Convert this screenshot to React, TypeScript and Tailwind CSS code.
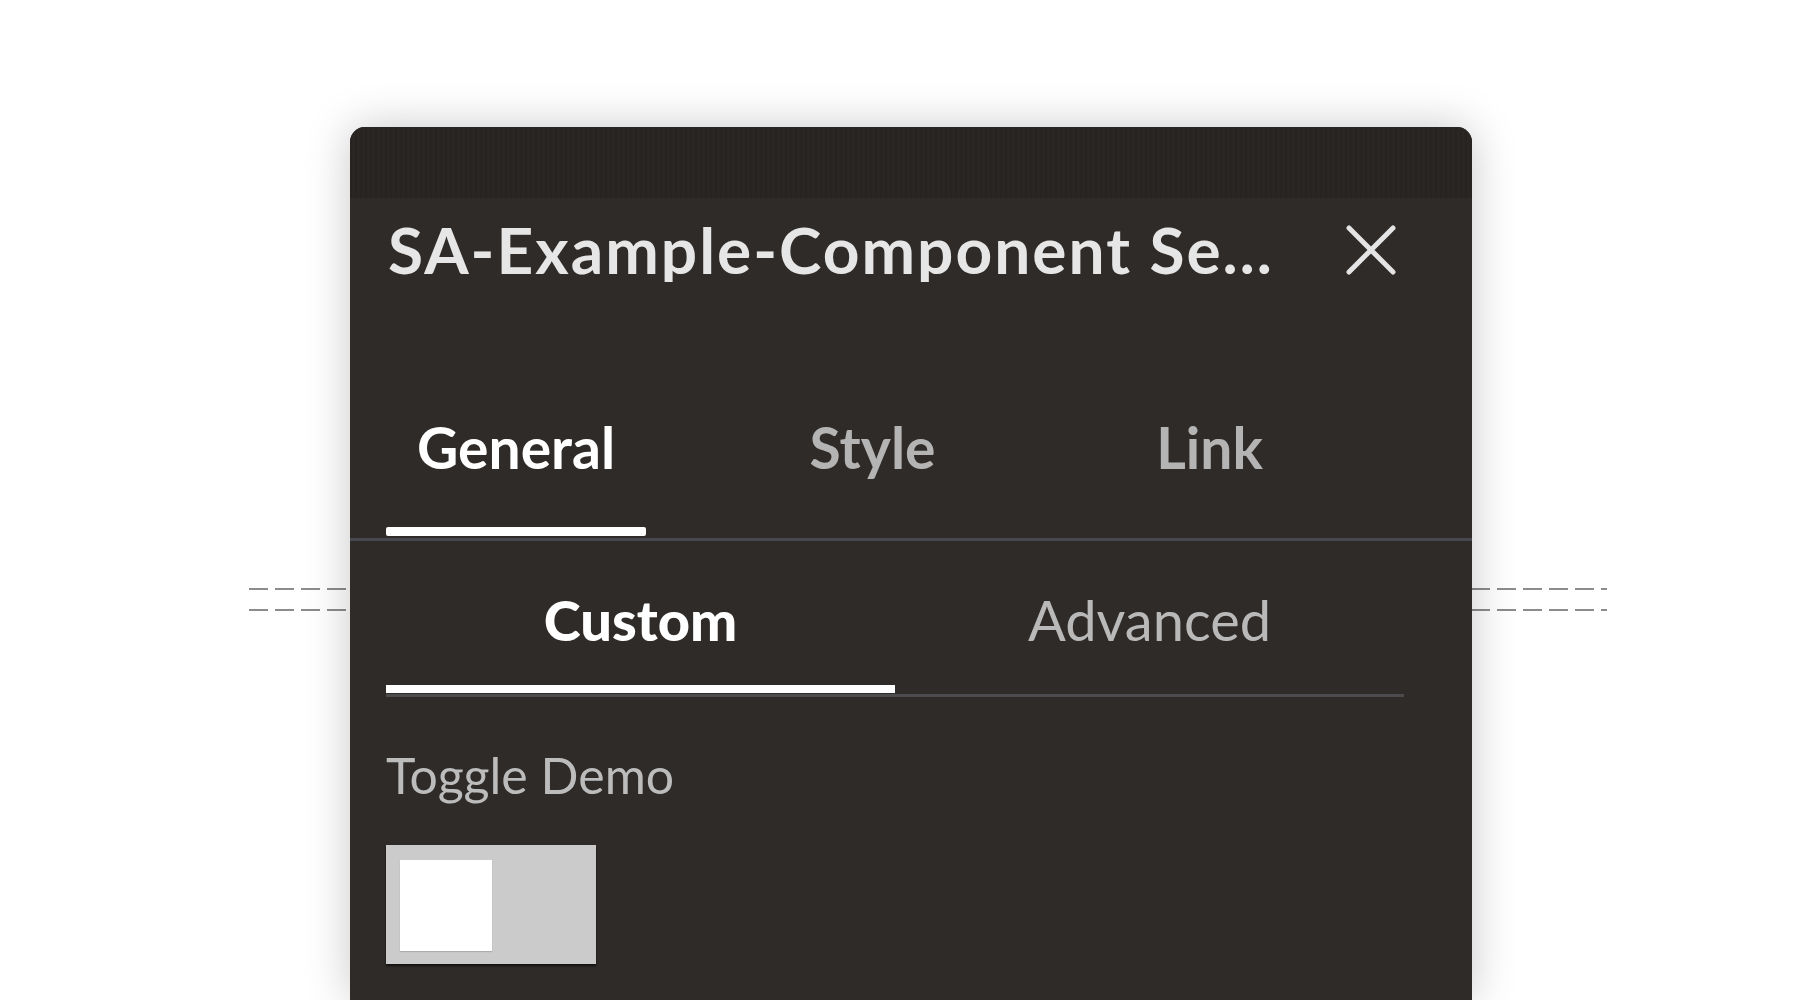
import React, { useState } from 'react';

const mainTabs = ['General', 'Style', 'Link'];
const subTabs = ['Custom', 'Advanced'];

const CloseIcon = () => (
  <svg width="50" height="50" viewBox="0 0 50 50" className="text-[#e4e4e4]">
    <path d="M3 3 L47 47 M47 3 L3 47" stroke="currentColor" strokeWidth="5" strokeLinecap="round" />
  </svg>
);

const ComponentSettingsPanel = () => {
  const [tab, setTab] = useState(0);
  const [subTab, setSubTab] = useState(0);
  const [on, setOn] = useState(false);

  return (
    <div className="relative z-10 ml-[350px] mt-[127px] w-[1122px] h-[873px] rounded-t-[15px] bg-[#2f2b28] shadow-[0_0_45px_rgba(0,0,0,0.22)] overflow-hidden font-['Lato','Open_Sans',sans-serif]">
      {/* header strip */}
      <div className="h-[71px] bg-[#2a2624] bg-[repeating-linear-gradient(90deg,rgba(0,0,0,0.08)_0_2px,transparent_2px_5px)]" />

      {/* title */}
      <div className="flex items-center h-[104px] pl-[38px]">
        <h1 className="w-[905px] truncate text-[64px] leading-none font-bold tracking-[2px] text-[#e6e6e6]">
          SA-Example-Component Settings
        </h1>
        <button className="ml-auto mr-[76px] flex items-center" aria-label="Close">
          <CloseIcon />
        </button>
      </div>

      {/* main tabs */}
      <div className="flex gap-[116px] pl-[36px] border-b-[3px] border-[#46494d]">
        {mainTabs.map((t, i) => (
          <button
            key={t}
            onClick={() => setTab(i)}
            className="flex flex-col items-center min-w-[221px] pt-[117px]"
          >
            <span className={`px-[31px] h-[57px] text-[57px] leading-none font-bold ${tab === i ? 'text-white' : 'text-[#b4b4b4]'}`}>
              {t}
            </span>
            <span className={`mt-[51px] mb-[2px] h-[9px] w-full rounded-[2px] ${tab === i ? 'bg-white' : 'bg-transparent'}`} />
          </button>
        ))}
      </div>

      {/* sub tabs */}
      <div className="flex ml-[36px] w-[1018px] border-b-[3px] border-[#4c4c4f]">
        {subTabs.map((t, i) => (
          <button key={t} onClick={() => setSubTab(i)} className="flex-1 flex flex-col items-center pt-[51px]">
            <span
              className={`h-[56px] text-[56px] leading-none ${
                subTab === i ? 'font-black text-white' : 'font-normal text-[#b9b9b9]'
              }`}
            >
              {t}
            </span>
            <span className={`mt-[37px] mb-[1px] h-[8px] w-full ${subTab === i ? 'bg-white' : 'bg-transparent'}`} />
          </button>
        ))}
      </div>

      {/* field */}
      <div className="pl-[36px]">
        <p className="mt-[53px] h-[50px] text-[50px] leading-none text-[#bcbcbc]">Toggle Demo</p>
        <button
          onClick={() => setOn(!on)}
          className={`mt-[45px] flex w-[210px] h-[119px] p-[14px] pt-[15px] bg-[#cbcbcb] shadow-[0_2px_2px_rgba(0,0,0,0.6)] ${
            on ? 'justify-end' : 'justify-start'
          }`}
          aria-label="Toggle Demo"
        >
          <span className="block w-[92px] h-[91px] bg-white shadow-[0_1px_1px_rgba(0,0,0,0.15)]" />
        </button>
      </div>
    </div>
  );
};

export default function App() {
  return (
    <div className="relative w-full h-[1000px] bg-white overflow-hidden">
      {/* canvas guide lines behind the panel */}
      <div className="absolute left-[249px] top-[588px] w-[1358px] h-[2px] bg-[repeating-linear-gradient(90deg,#8c8c8c_0_19px,transparent_19px_26px)]" />
      <div className="absolute left-[249px] top-[609px] w-[1358px] h-[2px] bg-[repeating-linear-gradient(90deg,#8c8c8c_0_19px,transparent_19px_26px)]" />
      <div className="pt-px -mt-px">
        <ComponentSettingsPanel />
      </div>
    </div>
  );
}
